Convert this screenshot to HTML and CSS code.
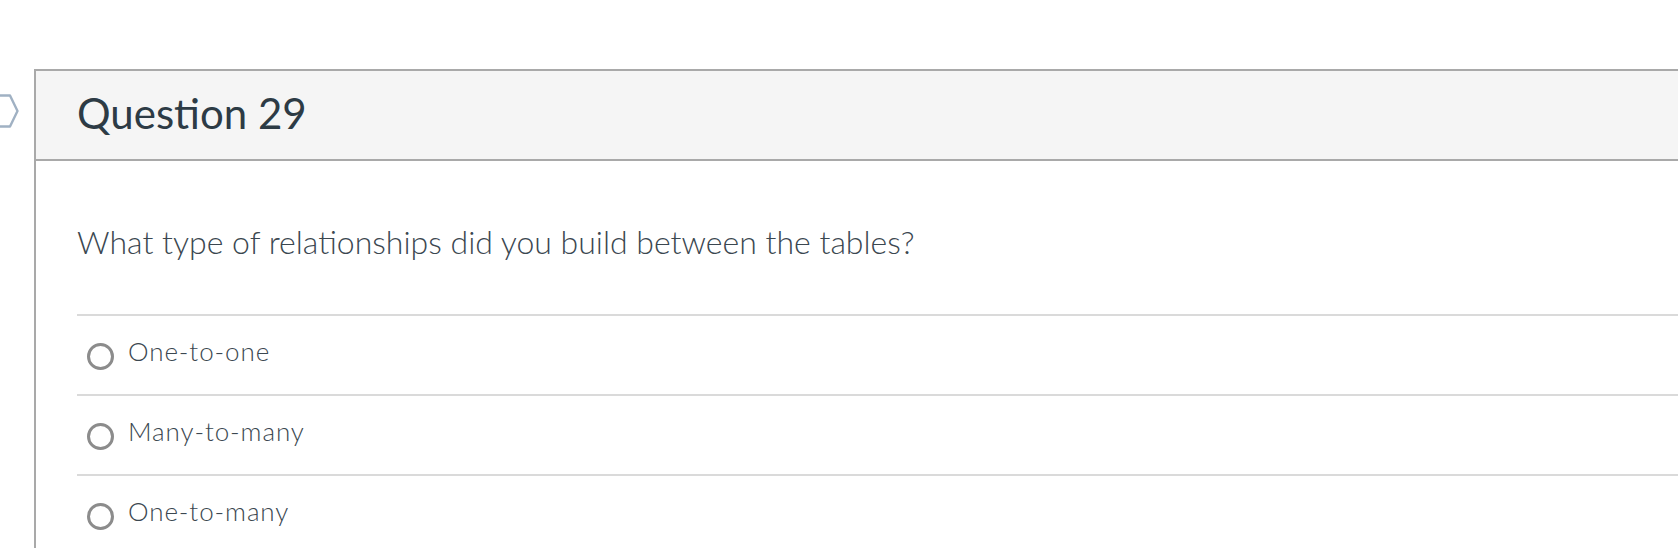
FILE: index.html
```html
<!DOCTYPE html>
<html lang="en">
<head>
<meta charset="utf-8">
<title>Question 29</title>
<link rel="stylesheet" href="styles.css">
</head>
<body>
<div class="page">
  <svg class="flag" width="22" height="38" viewBox="0 0 22 38" aria-hidden="true">
    <polyline points="0,2.5 10,2.5 17.5,18 10,33.5 0,33.5" fill="none" stroke="#a0b1c3" stroke-width="2.4" stroke-linejoin="round"/>
  </svg>
  <div class="question">
    <div class="question-header">
      <h2 class="question-title">Question 29</h2>
    </div>
    <div class="question-body">
      <p class="question-text">What type of relationships did you build between the tables?</p>
      <div class="answers">
        <label class="answer"><span class="radio"></span><span class="answer-text">One-to-one</span></label>
        <label class="answer"><span class="radio"></span><span class="answer-text">Many-to-many</span></label>
        <label class="answer"><span class="radio"></span><span class="answer-text">One-to-many</span></label>
      </div>
    </div>
  </div>
</div>
</body>
</html>
```

FILE: styles.css
```css
html, body {
  margin: 0;
  padding: 0;
  background: #ffffff;
  overflow: hidden;
}

body {
  font-family: Lato, "Open Sans", sans-serif;
  color: #2d3b45;
  width: 1678px;
  height: 548px;
}

.page {
  position: relative;
  padding-top: 69px;
  padding-left: 34px;
}

.flag {
  position: absolute;
  left: 0;
  top: 93px;
}

.question {
  width: 1700px;
  border-top: 2px solid #a9a9a9;
  border-left: 2px solid #a9a9a9;
}

.question-header {
  background: #f5f5f5;
  border-bottom: 2px solid #a9a9a9;
  padding: 19px 0 23px 41px;
  height: 46px;
}

.question-title {
  margin: 0;
  font-size: 42px;
  font-weight: 400;
  line-height: 46px;
  color: #2d3b45;
}

.question-body {
  padding: 62px 0 0 41px;
}

.question-text {
  margin: 0 0 53px 0;
  font-size: 32px;
  font-weight: 300;
  line-height: 38px;
  color: #3b4750;
}

.answers {
  display: flex;
  flex-direction: column;
}

.answer {
  display: flex;
  align-items: flex-start;
  border-top: 2px solid #dadada;
  padding: 20px 0 24px 0;
}

.radio {
  box-sizing: border-box;
  width: 27px;
  height: 27px;
  margin: 7px 14px 0 10px;
  border: 3px solid #8c8c8c;
  border-radius: 50%;
  flex: none;
}

.answer-text {
  font-size: 26px;
  font-weight: 300;
  line-height: 30px;
  letter-spacing: 0.9px;
  color: #3b4750;
}
```
